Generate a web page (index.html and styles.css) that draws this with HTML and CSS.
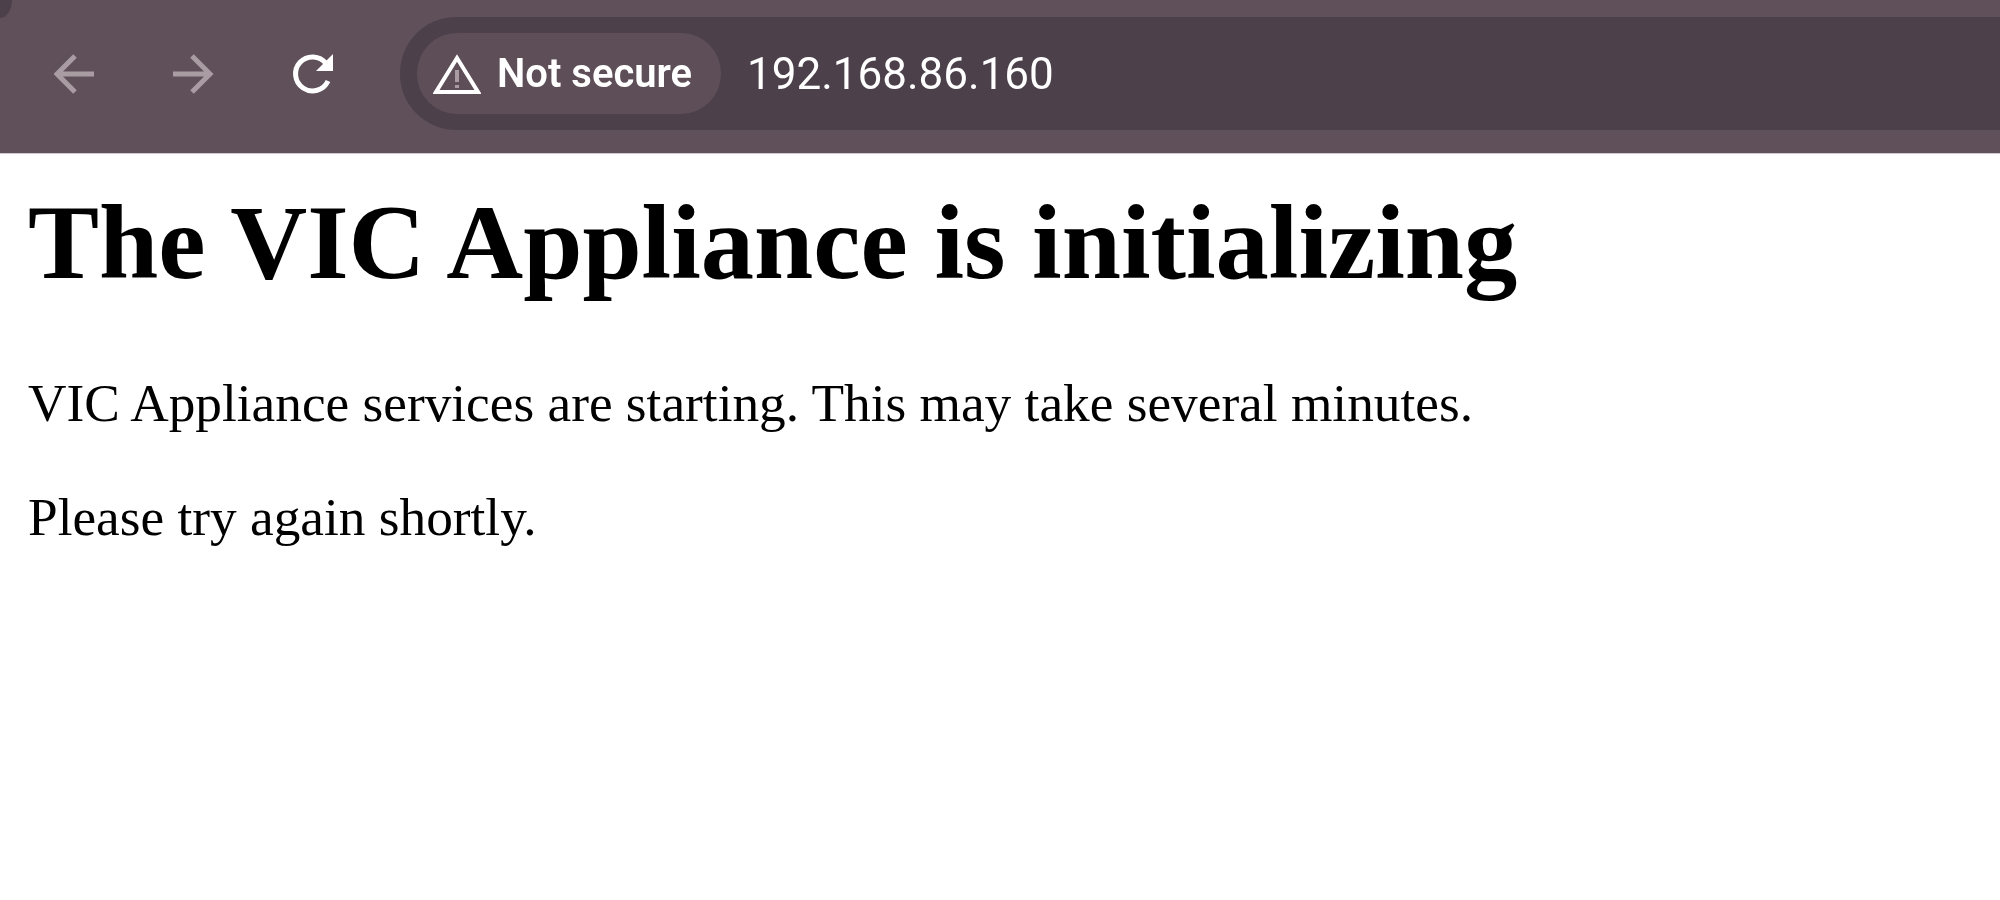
FILE: index.html
```html
<!DOCTYPE html>
<html lang="en">
  <head>
    <meta charset="UTF-8" />
    <title>The VIC Appliance is initializing</title>
    <link rel="stylesheet" href="styles.css">
  </head>
  <body>
    <div class="toolbar">
      <div class="tab-corner"></div>
      <svg class="nav-icon dim" viewBox="0 0 42 42"><path d="M40 21H4M21 3 3 21l18 18" /></svg>
      <svg class="nav-icon dim" viewBox="0 0 42 42"><path d="M0 21h36M19 3l18 18-18 18" /></svg>
      <svg class="nav-icon reload" viewBox="0 0 42 44"><path d="M36 29a17 17 0 1 1-2-17.500" /><path class="fill" d="M41 2v17H24z" /></svg>
      <div class="omnibox">
        <div class="chip">
          <svg class="warn" viewBox="0 0 48 42"><path d="M24 5 3 39h42z" /><path class="mark" d="M24 17v12M24 32v3" /></svg>
          <span class="chip-text">Not secure</span>
        </div>
        <span class="url">192.168.86.160</span>
      </div>
    </div>
    <div class="page">
      <h1>The VIC Appliance is initializing</h1>
      <p>VIC Appliance services are starting. This may take several minutes.</p>
      <p>Please try again shortly.</p>
    </div>
  </body>
</html>
```

FILE: styles.css
```css
body {
  margin: 0;
  background-color: #fff;
  color: #000;
  font-family: "Liberation Serif", serif;
}
.toolbar {
  position: relative;
  display: flex;
  align-items: center;
  height: 154px;
  box-sizing: border-box;
  padding: 17px 0 23px 54px;
  background-color: #60505a;
  border-bottom: 1px solid #cfc8cc;
  filter: blur(0.6px);
}
.tab-corner {
  position: absolute;
  top: 0;
  left: 0;
  width: 12px;
  height: 18px;
  background-color: #4c404a;
  border-bottom-right-radius: 100%;
}
.nav-icon {
  width: 42px;
  height: 42px;
  margin-right: 77px;
  fill: none;
  stroke: #a99ca3;
  stroke-width: 5;
}
.nav-icon.reload {
  height: 44px;
  margin-right: 66px;
  stroke: #fff;
}
.nav-icon .fill {
  fill: #fff;
  stroke: none;
}
.omnibox {
  flex: 1;
  display: flex;
  align-items: center;
  height: 113px;
  padding-left: 17px;
  background-color: #4c404a;
  border-radius: 56px 0 0 56px;
}
.chip {
  display: flex;
  align-items: center;
  width: 304px;
  height: 81px;
  box-sizing: border-box;
  padding-left: 16px;
  background-color: #5e4e58;
  border-radius: 40px;
}
.warn {
  width: 48px;
  height: 42px;
  margin-right: 16px;
  fill: none;
  stroke: #fff;
  stroke-width: 4;
}
.warn .mark {
  stroke: #a99ca3;
  stroke-width: 4;
}
.chip-text {
  color: #fff;
  font-family: Roboto, sans-serif;
  font-size: 40px;
  font-weight: 600;
}
.url {
  margin-left: 26px;
  color: #fff;
  font-family: Roboto, sans-serif;
  font-size: 44px;
}
.page {
  padding: 0 27px 0 28px;
  filter: blur(0.5px);
}
h1 {
  margin: 27px 0 0;
  font-size: 106.500px;
  font-weight: bold;
  line-height: 122px;
}
p {
  margin: 53px 0 0;
  font-size: 53.300px;
  line-height: 61px;
}
h1 + p {
  margin-top: 70px;
}
```
